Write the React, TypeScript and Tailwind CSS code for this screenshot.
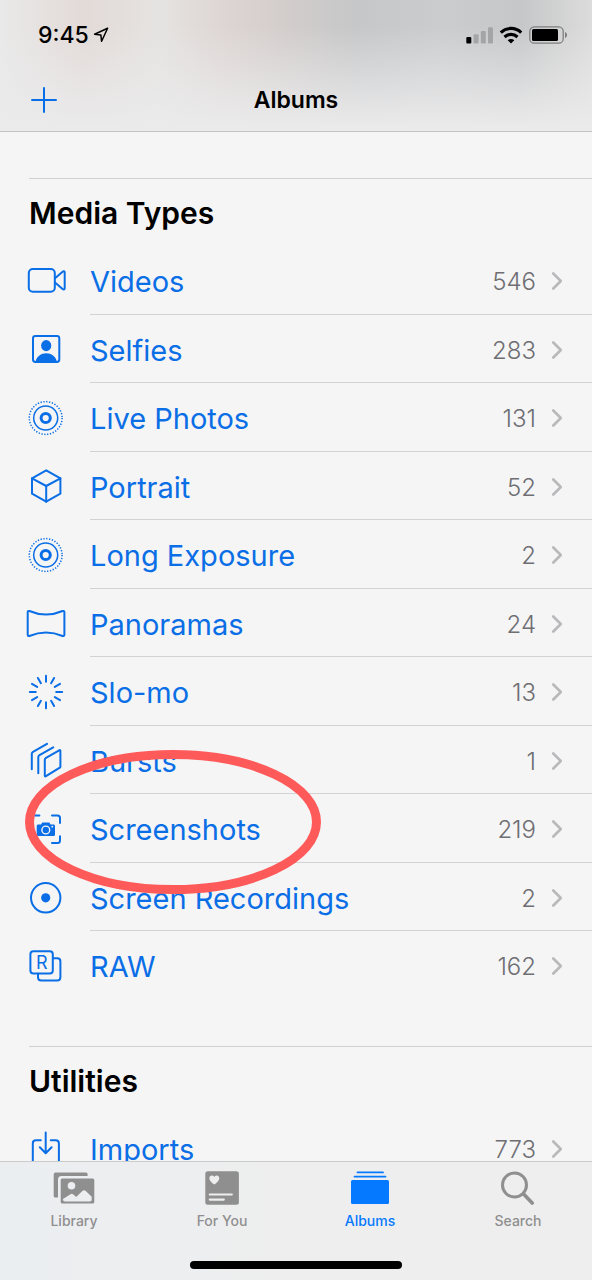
import type { ReactNode } from 'react';
import clsx from 'clsx';

type Album = {
  name: string;
  count: number;
  icon: ReactNode;
  circled?: boolean;
};

function Glyph({ children }: { children: ReactNode }) {
  return (
    <svg
      viewBox="0 0 40 40"
      className="size-10 shrink-0"
      fill="none"
      stroke="currentColor"
      strokeWidth="2"
      strokeLinecap="round"
      strokeLinejoin="round"
      aria-hidden="true"
    >
      {children}
    </svg>
  );
}

const ringsIcon = (
  <Glyph>
    <circle cx="19.7" cy="21" r="16.4" strokeWidth="1.5" strokeDasharray="1.3 1.562" strokeLinecap="butt" />
    <circle cx="19.7" cy="21" r="12" strokeWidth="1.5" />
    <circle cx="19.7" cy="21" r="4.6" strokeWidth="3" />
  </Glyph>
);

const spokes = [0, 30, 60, 90, 120, 150, 180, 210, 240, 270, 300, 330];

const mediaTypes: Album[] = [
  {
    name: 'Videos',
    count: 546,
    icon: (
      <Glyph>
        <rect x="2.8" y="9" width="26" height="22.8" rx="4" />
        <path d="M29 18.3l7.6-6.6c.9-.8 2.1-.5 2.1.8v15.8c0 1.3-1.2 1.6-2.1.8L29 22.5" />
      </Glyph>
    ),
  },
  {
    name: 'Selfies',
    count: 283,
    icon: (
      <Glyph>
        <rect x="7" y="7" width="26.3" height="26" rx="2.4" />
        <ellipse cx="20.2" cy="16.6" rx="5.1" ry="5.6" fill="currentColor" stroke="none" />
        <path d="M9.5 32.5c1.2-5 5.5-8.2 10.7-8.2s9.5 3.2 10.7 8.2z" fill="currentColor" stroke="none" />
      </Glyph>
    ),
  },
  { name: 'Live Photos', count: 131, icon: ringsIcon },
  {
    name: 'Portrait',
    count: 52,
    icon: (
      <Glyph>
        <path d="M20.2 4.3l14.2 8v15.4l-14.2 8-14.2-8V12.3z" />
        <path d="M6 12.3l14.2 7.7 14.2-7.7M20.2 20v15.7" />
      </Glyph>
    ),
  },
  { name: 'Long Exposure', count: 2, icon: ringsIcon },
  {
    name: 'Panoramas',
    count: 24,
    icon: (
      <Glyph>
        <path d="M1.7 9.2c0-1 .7-1.5 1.7-1.2 10.7 4.6 22.5 4.6 33.2 0 1-.3 1.8.2 1.8 1.2v22.6c0 1-.8 1.5-1.8 1.2-10.7-4.6-22.5-4.6-33.2 0-1 .3-1.7-.2-1.7-1.2z" />
      </Glyph>
    ),
  },
  {
    name: 'Slo-mo',
    count: 13,
    icon: (
      <Glyph>
        {spokes.map((angle) => (
          <path key={angle} d="M20 10.8V4.8" transform={`rotate(${angle} 20 21)`} />
        ))}
      </Glyph>
    ),
  },
  {
    name: 'Bursts',
    count: 1,
    icon: (
      <Glyph>
        <path d="M20 17.9l13.2-7.6c.7-.4 1.2-.1 1.2.7v15.7c0 .5-.2.8-.6 1L20 36.2c-.7.4-1.2.1-1.2-.7V19.8c0-.9.4-1.4 1.2-1.9z" />
        <path d="M27.2 7.3l-13.7 7.9c-.8.5-1.2 1-1.2 1.9v16.2" />
        <path d="M21 3.8L7 11.8c-.8.5-1.2 1-1.2 1.9v15.5" />
      </Glyph>
    ),
  },
  {
    name: 'Screenshots',
    count: 219,
    circled: true,
    icon: (
      <Glyph>
        <path d="M26 7.6h5.5c1.7 0 2.5.8 2.5 2.5v5M34 28.3v4.2c0 1.7-.8 2.5-2.5 2.5H26M13.4 35H8.5C6.8 35 6 34.2 6 32.5v-4.2M6 15.1v-5c0-1.7.8-2.5 2.5-2.5h4.9" />
        <path
          d="M12.3 16.5h2.7l1.3-2h7l1.3 2h2.8c1 0 1.6.6 1.6 1.6v8.3c0 1-.6 1.6-1.6 1.6H12.3c-1 0-1.6-.6-1.6-1.6v-8.3c0-1 .6-1.6 1.6-1.6z"
          fill="currentColor"
          stroke="none"
        />
        <circle cx="19.8" cy="22" r="3.9" stroke="#f5f5f5" strokeWidth="1.4" />
        <circle cx="26.3" cy="18.7" r=".9" fill="#f5f5f5" stroke="none" />
      </Glyph>
    ),
  },
  {
    name: 'Screen Recordings',
    count: 2,
    icon: (
      <Glyph>
        <circle cx="19.7" cy="20.8" r="14.7" />
        <circle cx="19.7" cy="20.8" r="4.6" fill="currentColor" stroke="none" />
      </Glyph>
    ),
  },
  {
    name: 'RAW',
    count: 162,
    icon: (
      <Glyph>
        <rect x="4.4" y="6.2" width="22.4" height="22.4" rx="3" />
        <path d="M27 13.2h4.2c2 0 3.2 1.2 3.2 3.2v15.8c0 2-1.2 3.2-3.2 3.2h-16c-2 0-3.2-1.2-3.2-3.2v-3.4" />
        <text x="15.8" y="24" fontSize="18" fontWeight="400" textAnchor="middle" fill="currentColor" stroke="none">
          R
        </text>
      </Glyph>
    ),
  },
];

const utilities: Album[] = [
  {
    name: 'Imports',
    count: 773,
    icon: (
      <Glyph>
        <path d="M19.7 4.5v20M13.8 19.3l5.9 6 5.9-6" />
        <path d="M14.8 12.2H10c-2 0-3.2 1.2-3.2 3.2v17c0 2 1.2 3.2 3.2 3.2h19.7c2 0 3.2-1.2 3.2-3.2v-17c0-2-1.2-3.2-3.2-3.2h-4.9" />
      </Glyph>
    ),
  },
];

function AlbumRow({ album }: { album: Album }) {
  return (
    <li className="group relative h-[68px] odd:h-[69px]">
      <a href="#" className="flex h-full pl-[26px] text-[#0a6ee6]">
        <span className="w-16 pt-[14px]">{album.icon}</span>
        <span className="flex flex-1 border-b border-[#d3d3d5] pt-[15px] pr-[30px] group-last:border-transparent">
          <span className="flex-1 text-[29px] leading-[42px]">{album.name}</span>
          <span className="text-2xl leading-[41px] font-light text-[#6e6e73]">{album.count}</span>
          <svg
            viewBox="0 0 10 40"
            className="ml-4 h-10 w-[10px]"
            fill="none"
            stroke="#b9b9bb"
            strokeWidth="2.6"
            strokeLinecap="round"
            strokeLinejoin="round"
            aria-hidden="true"
          >
            <path d="M1.3 12.5l7.5 7.5-7.5 7.5" />
          </svg>
        </span>
      </a>
      {album.circled && (
        <svg
          viewBox="0 0 296 144"
          className="pointer-events-none absolute -top-11 left-[25px] z-10 h-36 w-[296px]"
          aria-hidden="true"
        >
          <ellipse cx="148" cy="72" rx="143.5" ry="67.5" fill="none" stroke="#ff5a5a" strokeWidth="9" />
        </svg>
      )}
    </li>
  );
}

function AlbumSection({ title, albums }: { title: string; albums: Album[] }) {
  return (
    <section className="pt-[46px]">
      <h2 className="ml-[29px] border-t border-[#d0d0d1] pt-4 pb-[15px] text-[30px] leading-9 font-semibold text-black">
        {title}
      </h2>
      <ul>
        {albums.map((album) => (
          <AlbumRow key={album.name} album={album} />
        ))}
      </ul>
    </section>
  );
}

function StatusBar() {
  return (
    <div className="flex h-[70px] items-center pr-6 pl-[38px] text-black">
      <span className="text-[23px] leading-8 font-medium">9:45</span>
      <svg viewBox="0 0 16 16" className="ml-1 size-4" fill="none" stroke="currentColor" strokeWidth="1.5" aria-hidden="true">
        <path d="M14.6 1.3L1.6 7.2l6.3.9.7 6.2z" strokeLinejoin="round" />
      </svg>
      <svg viewBox="0 0 102 20" className="ml-auto h-5 w-[102px]" aria-hidden="true">
        <rect x=".3" y="12" width="5" height="6.5" rx="1" />
        <g fill="#a5a5a6">
          <rect x="7.6" y="9.2" width="5" height="9.3" rx="1" />
          <rect x="14.8" y="6" width="5" height="12.5" rx="1" />
          <rect x="22" y="2.3" width="5" height="16.2" rx="1" />
        </g>
        <g fill="none" stroke="#000" strokeWidth="3.1">
          <path d="M34.8 7.6c5.7-5.6 14.7-5.6 20.4 0" />
          <path d="M38.5 12c3.7-3.5 9.3-3.5 13 0" />
        </g>
        <path d="M45 18.6l-3.3-3.4c1.8-1.6 4.8-1.6 6.6 0z" />
        <rect x="63.8" y="1.8" width="33.4" height="16.4" rx="4.5" fill="none" stroke="#7f7f80" strokeWidth="1.3" />
        <rect x="66" y="4" width="26" height="12" rx="1.5" />
        <path d="M99 7v6c1.3-.6 2-1.7 2-3s-.7-2.4-2-3z" fill="#7f7f80" />
      </svg>
    </div>
  );
}

const tabs = [
  {
    label: 'Library',
    icon: (
      <>
        <path d="M3 1.5h30a1.6 1.6 0 0 1 1.6 1.6V5H8.5a3.5 3.5 0 0 0-3.5 3.5V26.5H2.3A1.6 1.6 0 0 1 .7 24.9V3.5a2 2 0 0 1 2-2z" />
        <path
          fillRule="evenodd"
          d="M9.3 7.5h30.4a1.6 1.6 0 0 1 1.6 1.6v21.8a1.6 1.6 0 0 1-1.6 1.6H9.3a1.6 1.6 0 0 1-1.6-1.6V9.1a1.6 1.6 0 0 1 1.6-1.6zM18.5 11a3.8 3.8 0 1 0 0 7.6 3.8 3.8 0 0 0 0-7.6zM10 28.5c0 1.2.8 2 2 2h24.7c1.2 0 2-.8 2-2v-2.7l-6.2-6c-1-.9-1.9-.9-2.9 0L23.2 26l-3.1-2.7c-.9-.8-1.7-.8-2.6 0L10 28z"
        />
      </>
    ),
  },
  {
    label: 'For You',
    icon: (
      <>
        <rect x="4.3" y=".3" width="33.6" height="33.4" rx="2.5" />
        <path
          d="M13.3 13.6c-3.2-2.3-5-4.1-5-6.3 0-3 3.6-4 5-1.3 1.4-2.7 5-1.7 5 1.3 0 2.2-1.8 4-5 6.3z"
          fill="#eee"
        />
        <path d="M8.8 23.5h22M8.8 28.6h14" stroke="#eee" strokeWidth="2.2" strokeLinecap="round" />
      </>
    ),
  },
  {
    label: 'Albums',
    active: true,
    icon: (
      <>
        <path d="M8.5 1.4h25.5M5.5 5.6h31" stroke="currentColor" strokeWidth="1.8" strokeLinecap="round" />
        <rect x="2" y="9" width="38" height="24" rx="1.5" />
      </>
    ),
  },
  {
    label: 'Search',
    icon: (
      <g fill="none" stroke="currentColor" strokeWidth="3" strokeLinecap="round">
        <circle cx="17.5" cy="14" r="12" />
        <path d="M26.6 23l8.6 9" strokeWidth="3.6" />
      </g>
    ),
  },
];

export default function App() {
  return (
    <div className="flex h-screen flex-col bg-[#f5f5f5] font-[Inter,sans-serif]">
      <header className="shrink-0 border-b border-[#c4c4c5] bg-[linear-gradient(to_bottom,transparent_20%,#ebebec_98%),linear-gradient(to_right,#e9e9e9_0%,#e2dad7_14%,#e5e3e1_27%,#ddd5d3_38%,#d3cdcc_48%,#c6c7c8_60%,#cbcccd_75%,#c6c7c8_88%,#dcdcdc_100%)]">
        <StatusBar />
        <div className="grid h-[61px] grid-cols-3 items-center px-[31px] pb-0.5">
          <button type="button" aria-label="Add album" className="size-[26px] text-[#0a6ee6]">
            <svg viewBox="0 0 26 26" fill="none" stroke="currentColor" strokeWidth="2" strokeLinecap="round" aria-hidden="true">
              <path d="M13 1v24M1 13h24" />
            </svg>
          </button>
          <h1 className="text-center text-[23px] leading-8 font-semibold text-black">Albums</h1>
        </div>
      </header>

      <main className="min-h-0 flex-1 overflow-y-auto [scrollbar-width:none]">
        <AlbumSection title="Media Types" albums={mediaTypes} />
        <AlbumSection title="Utilities" albums={utilities} />
      </main>

      <footer className="shrink-0 border-t border-[#cbcbcc] bg-linear-to-r from-[#ebeef1] to-[#eeeeee] to-50%">
        <nav className="grid grid-cols-4 pt-[9px]">
          {tabs.map((tab) => (
            <a
              key={tab.label}
              href="#"
              aria-current={tab.active ? 'page' : undefined}
              className={clsx('flex flex-col items-center gap-1', tab.active ? 'text-[#0579ff]' : 'text-[#8f8f90]')}
            >
              <svg viewBox="0 0 42 34" className="h-[34px] w-[42px]" fill="currentColor" aria-hidden="true">
                {tab.icon}
              </svg>
              <span className="text-sm leading-6 font-medium">{tab.label}</span>
            </a>
          ))}
        </nav>
        <div className="mx-auto mt-7 mb-[11px] h-2 w-[212px] rounded-full bg-black" />
      </footer>
    </div>
  );
}
